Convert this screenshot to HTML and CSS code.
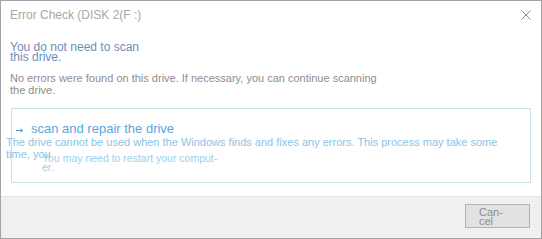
FILE: index.html
```html
<!DOCTYPE html>
<html lang="en">
<head>
<meta charset="utf-8">
<title>Error Check</title>
<link rel="stylesheet" href="styles.css">
</head>
<body>
<div class="window">
  <div class="titlebar">
    <span class="title">Error Check (DISK 2(F :)</span>
    <svg class="close" width="10" height="10" viewBox="0 0 10 10" aria-label="Close">
      <path d="M0.5 0.5 L9.5 9.5 M9.5 0.5 L0.5 9.5" stroke="#8a8a8a" stroke-width="1" fill="none"/>
    </svg>
  </div>
  <div class="content">
    <h1 class="headline">You do not need to scan this drive.</h1>
    <p class="info">No errors were found on this drive. If necessary, you can continue scanning the drive.</p>
    <div class="option">
      <div class="action">
        <svg class="arrow" width="7" height="5" viewBox="0 0 7 5">
          <path d="M0 2.5 H6.5 M4.5 0.8 L6.6 2.5 L4.5 4.2" stroke="#4f8fc6" stroke-width="1" fill="none"/>
        </svg>
        <span class="action-label">scan and repair the drive</span>
      </div>
      <p class="desc">The drive cannot be used when the Windows finds and fixes any errors. This process may take some time, you</p>
      <p class="note"><span class="nowrap">You may need to restart your comput-</span><br><span class="nowrap">er.</span></p>
    </div>
  </div>
  <div class="footer">
    <button class="btn" type="button">Can-<br>cel</button>
  </div>
</div>
</body>
</html>
```

FILE: styles.css
```css
html, body {
  margin: 0;
  padding: 0;
  background: #ffffff;
}

body {
  font-family: "Liberation Sans", Arial, sans-serif;
}

.window {
  box-sizing: border-box;
  width: 542px;
  height: 239px;
  border: 1px solid #a4a4a4;
  background: #ffffff;
  display: flex;
  flex-direction: column;
  overflow: hidden;
}

.titlebar {
  display: flex;
  justify-content: space-between;
  align-items: flex-start;
  padding: 7px 10px 0 9px;
}

.title {
  font-size: 12px;
  line-height: 14px;
  color: #a8a8a8;
}

.close {
  display: block;
  margin-top: 2px;
}

.content {
  flex: 1;
  padding: 0 9px 0 9px;
  display: flex;
  flex-direction: column;
  align-items: flex-start;
}

.headline {
  margin: 20px 0 0 0;
  width: 145px;
  font-size: 12px;
  line-height: 10px;
  font-weight: normal;
  color: #6f8cb8;
}

.info {
  margin: 10px 0 0 0;
  width: 382px;
  font-size: 11px;
  line-height: 12px;
  color: #8e8e8e;
}

.option {
  box-sizing: border-box;
  margin: 12px 0 0 1px;
  width: 520px;
  height: 75px;
  border: 1px solid #cde0ea;
  padding: 12px 0 0 4px;
}

.action {
  display: flex;
  align-items: center;
  height: 15px;
}

.arrow {
  display: block;
  margin: 3px 8px 0 0;
}

.action-label {
  font-size: 13px;
  line-height: 15px;
  color: #5aa6da;
}

.desc {
  margin: 0 0 0 -10px;
  width: 506px;
  font-size: 11px;
  line-height: 12px;
  color: #8cc3e5;
}

.note {
  margin: -6px 0 0 26px;
  font-size: 10.5px;
  line-height: 9px;
  color: #9cd0ec;
}

.nowrap {
  white-space: nowrap;
}

.footer {
  height: 42px;
  box-sizing: border-box;
  border-top: 1px solid #e4e4e4;
  background: #f0f0f0;
  display: flex;
  justify-content: flex-end;
  align-items: flex-start;
  padding: 7px 11px 0 0;
}

.btn {
  box-sizing: border-box;
  width: 65px;
  height: 24px;
  margin: 0;
  padding: 2px 0 0 13px;
  border: 1px solid #b4b4b4;
  background: #e1e1e1;
  font-family: "Liberation Sans", Arial, sans-serif;
  font-size: 11px;
  line-height: 9px;
  color: #8d8d8d;
  text-align: left;
  vertical-align: top;
  display: block;
}
```
